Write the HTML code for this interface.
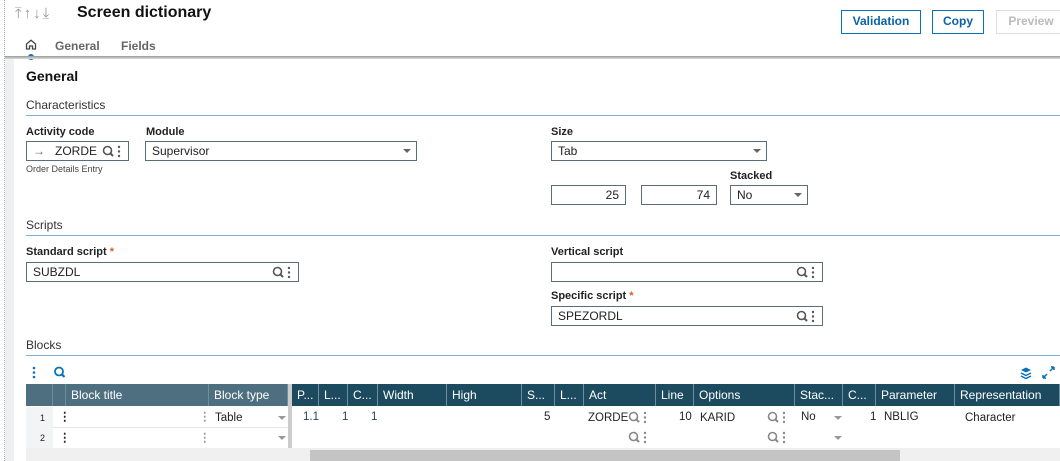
<!DOCTYPE html><html><head><style>
*{box-sizing:border-box;margin:0;padding:0}
body{width:1060px;height:461px;overflow:hidden;background:#fff;font-family:"Liberation Sans",sans-serif;font-size:12px;color:#222;position:relative}
.a{position:absolute;white-space:nowrap}
.lbl{font-weight:bold;font-size:11px;color:#222}
.inp{position:absolute;border:1px solid #5a6e7a;height:20px;background:#fff;font-size:12px;padding:2px 6px;line-height:14px}
.btn{position:absolute;border:1px solid #0a71b9;color:#0a62a8;font-weight:bold;font-size:12px;text-align:center;line-height:20px;height:24px}
.sec{position:absolute;left:26px;width:1034px;border-bottom:1px solid #7fb1d6;font-size:12px;color:#333;height:18px}
.caret{position:absolute;right:5px;top:7px;width:0;height:0;border-left:4px solid transparent;border-right:4px solid transparent;border-top:4px solid #666}
.th{position:absolute;top:384px;height:22px;background:#1c4a5e;color:#fff;font-size:12px;line-height:22px;padding-left:5px;border-right:1px solid #6f8e9c;overflow:hidden}
.fz{background:#4e6f7f}
.td{position:absolute;font-size:11.5px;line-height:20px}
.ic{position:absolute;width:22px;height:14px}
</style></head><body>
<svg width="0" height="0" style="position:absolute"><defs>
<symbol id="s" viewBox="0 0 22 14"><circle cx="5.5" cy="5.5" r="4" fill="none" stroke="currentColor" stroke-width="1.6"/><path d="M8.5 8.5L11 11" stroke="currentColor" stroke-width="2"/><circle cx="17" cy="2" r="1.2" fill="currentColor"/><circle cx="17" cy="6.5" r="1.2" fill="currentColor"/><circle cx="17" cy="11" r="1.2" fill="currentColor"/></symbol>
</defs></svg>
<div class="a" style="left:4px;top:0;width:1px;height:461px;border-left:1px dotted #aaa"></div>
<div class="a" style="left:15px;top:5px;color:#999;font-size:15px;letter-spacing:2px">⤒↑↓⤓</div>
<div class="a" style="left:77px;top:4px;font-size:16px;font-weight:bold;color:#111">Screen dictionary</div>
<div class="btn" style="left:841px;top:10px;width:80px">Validation</div>
<div class="btn" style="left:932px;top:10px;width:52px">Copy</div>
<div class="btn" style="left:996px;top:10px;width:70px;border-color:#ddd;color:#bbb">Preview</div>
<svg class="a" style="left:25px;top:39px" width="12" height="11" viewBox="0 0 12 11"><path d="M1.5 10V5L6 1.2 10.5 5V10H7.5V7H4.5V10Z" fill="none" stroke="#444" stroke-width="1.3"/></svg>
<div class="a" style="left:28px;top:54px;width:6px;height:6px;border-radius:3px;background:#0a71b9"></div>
<div class="a" style="left:55px;top:39px;font-size:12px;font-weight:bold;color:#666">General</div>
<div class="a" style="left:121px;top:39px;font-size:12px;font-weight:bold;color:#666">Fields</div>
<div class="a" style="left:5px;top:56px;width:1055px;height:3px;background:linear-gradient(#999,#ddd)"></div>
<div class="a" style="left:5px;top:59px;width:9px;height:402px;background:#eef0f2"></div>
<div class="a" style="left:26px;top:68px;font-size:14px;font-weight:bold;color:#111">General</div>
<div class="sec" style="top:98px">Characteristics</div>
<div class="a lbl" style="left:26px;top:126px">Activity code</div>
<div class="inp" style="left:26px;top:141px;width:103px;color:#222"><span style="color:#666">→</span>&nbsp;&nbsp; ZORDE <svg class="ic" style="right:4px;top:3px;color:#555"><use href="#s"/></svg></div>
<div class="a" style="left:26px;top:164px;font-size:9px;color:#444">Order Details Entry</div>
<div class="a lbl" style="left:146px;top:126px">Module</div>
<div class="inp" style="left:145px;top:141px;width:272px">Supervisor<span class="caret"></span></div>
<div class="a lbl" style="left:551px;top:126px">Size</div>
<div class="inp" style="left:551px;top:141px;width:216px">Tab<span class="caret"></span></div>
<div class="a lbl" style="left:730px;top:170px">Stacked</div>
<div class="inp" style="left:551px;top:185px;width:75px;text-align:right">25</div>
<div class="inp" style="left:641px;top:185px;width:76px;text-align:right">74</div>
<div class="inp" style="left:730px;top:185px;width:78px">No<span class="caret"></span></div>
<div class="sec" style="top:218px">Scripts</div>
<div class="a lbl" style="left:26px;top:246px">Standard script <span style="color:#e05a2b">*</span></div>
<div class="inp" style="left:26px;top:262px;width:273px">SUBZDL<svg class="ic" style="right:4px;top:3px;color:#555"><use href="#s"/></svg></div>
<div class="a lbl" style="left:551px;top:246px">Vertical script</div>
<div class="inp" style="left:551px;top:262px;width:272px"><svg class="ic" style="right:4px;top:3px;color:#555"><use href="#s"/></svg></div>
<div class="a lbl" style="left:551px;top:290px">Specific script <span style="color:#e05a2b">*</span></div>
<div class="inp" style="left:551px;top:306px;width:272px">SPEZORDL<svg class="ic" style="right:4px;top:3px;color:#555"><use href="#s"/></svg></div>
<div class="sec" style="top:338px">Blocks</div>
<svg class="a" style="left:31px;top:366px" width="36" height="13" viewBox="0 0 36 13"><circle cx="3" cy="2" r="1.3" fill="#0a71b9"/><circle cx="3" cy="6.5" r="1.3" fill="#0a71b9"/><circle cx="3" cy="11" r="1.3" fill="#0a71b9"/><circle cx="28" cy="5.5" r="4" fill="none" stroke="#0a71b9" stroke-width="1.8"/><path d="M31 8.5L33.5 11" stroke="#0a71b9" stroke-width="2.2"/></svg>
<svg class="a" style="left:1020px;top:366px" width="36" height="13" viewBox="0 0 36 13"><path d="M1 4L6 1.5 11 4 6 6.5Z" fill="#0a71b9"/><path d="M1 7L6 9.5 11 7M1 10L6 12.5 11 10" fill="none" stroke="#0a71b9" stroke-width="1.4"/><path d="M23 12L27 8M23 12V9M23 12H26M34 1L30 5M34 1V4M34 1H31" stroke="#0a71b9" stroke-width="1.5" fill="none"/></svg>
<div class="th fz" style="left:26px;width:27px"></div>
<div class="th fz" style="left:53px;width:13px"></div>
<div class="th fz" style="left:66px;width:143px">Block title</div>
<div class="th fz" style="left:209px;width:79px">Block type</div>
<div class="a" style="left:288px;top:384px;width:4px;height:64px;background:#ccc"></div>
<div class="th" style="left:292px;width:27px">P...</div>
<div class="th" style="left:319px;width:29px">L...</div>
<div class="th" style="left:348px;width:30px">C...</div>
<div class="th" style="left:378px;width:69px">Width</div>
<div class="th" style="left:447px;width:75px">High</div>
<div class="th" style="left:522px;width:33px">S...</div>
<div class="th" style="left:555px;width:29px">L...</div>
<div class="th" style="left:584px;width:72px">Act</div>
<div class="th" style="left:656px;width:38px">Line</div>
<div class="th" style="left:694px;width:101px">Options</div>
<div class="th" style="left:795px;width:48px">Stac...</div>
<div class="th" style="left:843px;width:33px">C...</div>
<div class="th" style="left:876px;width:79px">Parameter</div>
<div class="th" style="left:955px;width:105px">Representation</div>
<div class="a" style="left:26px;top:407px;width:27px;height:41px;background:#f3f4f5"></div>
<div class="a" style="left:53px;top:427px;width:235px;border-top:1px solid #e5e5e5"></div>
<div class="td" style="left:40px;top:408px;font-size:9px">1</div>
<div class="td" style="left:40px;top:428px;font-size:9px">2</div>
<div class="td" style="left:59px;top:407px;font-weight:bold">⋮</div>
<div class="td" style="left:59px;top:428px;font-weight:bold">⋮</div>
<div class="td" style="left:199px;top:407px;color:#999;font-weight:bold">⋮</div>
<div class="td" style="left:199px;top:428px;color:#999;font-weight:bold">⋮</div>
<div class="td" style="left:215px;top:408px">Table</div>
<div class="caret" style="left:278px;top:416px;border-top-color:#999"></div>
<div class="caret" style="left:278px;top:436px;border-top-color:#999"></div>
<div class="td" style="left:303px;top:407px;color:#245">1.1</div>
<div class="td" style="left:342px;top:407px;color:#245">1</div>
<div class="td" style="left:371px;top:407px;color:#245">1</div>
<div class="td" style="left:544px;top:407px">5</div>
<div class="td" style="left:588px;top:408px">ZORDE</div>
<svg class="ic" style="left:628px;top:411px;color:#888"><use href="#s"/></svg>
<svg class="ic" style="left:628px;top:431px;color:#888"><use href="#s"/></svg>
<div class="td" style="left:679px;top:407px">10</div>
<div class="td" style="left:700px;top:408px">KARID</div>
<svg class="ic" style="left:767px;top:411px;color:#888"><use href="#s"/></svg>
<svg class="ic" style="left:767px;top:431px;color:#888"><use href="#s"/></svg>
<div class="td" style="left:801px;top:407px">No</div>
<div class="caret" style="left:834px;top:416px;border-top-color:#999"></div>
<div class="caret" style="left:834px;top:436px;border-top-color:#999"></div>
<div class="td" style="left:870px;top:407px">1</div>
<div class="td" style="left:884px;top:407px">NBLIG</div>
<div class="td" style="left:965px;top:408px">Character</div>
<div class="a" style="left:26px;top:448px;width:1034px;height:13px;background:#f0f0f0"></div>
<div class="a" style="left:310px;top:450px;width:590px;height:11px;background:#c4c4c4"></div>
</body></html>
